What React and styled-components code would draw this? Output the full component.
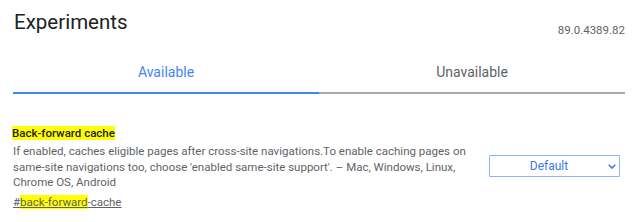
import React, { useState } from 'react';
import styled, { createGlobalStyle } from 'styled-components';

const GlobalStyle = createGlobalStyle`
  html, body {
    margin: 0;
    padding: 0;
    background: #fff;
    font-family: Roboto, "Liberation Sans", sans-serif;
  }
`;

const Page = styled.div`
  width: 640px;
  height: 222px;
  overflow: hidden;
  padding: 0 15px 0 13px;
  box-sizing: border-box;
`;

const Header = styled.div`
  display: flex;
  justify-content: space-between;
  align-items: flex-start;
  height: 34px;
  padding-top: 10px;
  box-sizing: border-box;
`;

const Title = styled.h1`
  margin: 0 0 0 1px;
  font-size: 20.5px;
  font-weight: 400;
  color: #202124;
  line-height: 24px;
`;

const Version = styled.span`
  margin-top: 13px;
  font-size: 11.5px;
  line-height: 14px;
  color: #5f6368;
`;

const Tabs = styled.div`
  display: flex;
  margin-top: 26px;
`;

const Tab = styled.div`
  flex: 1;
  text-align: center;
  font-size: 14px;
  line-height: 24px;
  padding-bottom: 8px;
  color: ${({ active }) => (active ? '#4285f4' : '#5f6368')};
  border-bottom: 2px solid ${({ active }) => (active ? '#4285f4' : '#aaaaaa')};
  cursor: pointer;
`;

const Experiment = styled.div`
  display: flex;
  align-items: flex-start;
  justify-content: space-between;
  margin-top: 32px;
`;

const Info = styled.div`
  width: 460px;
`;

const Mark = styled.mark`
  background: #ffff00;
  color: inherit;
`;

const Name = styled.h2`
  margin: 0 0 0 -1px;
  font-size: 11.5px;
  font-weight: 500;
  color: #202124;
  line-height: 15px;
`;

const Desc = styled.p`
  margin: 3px 0 0;
  font-size: 11.5px;
  line-height: 15.6px;
  color: #5f6368;
`;

const Permalink = styled.a`
  display: inline-block;
  margin-top: 2.5px;
  font-size: 11.5px;
  line-height: 15.5px;
  color: #5f6368;
  text-decoration: underline;
`;

const SelectBox = styled.div`
  position: relative;
  width: 131px;
  height: 22px;
  margin: 29px 5px 0 0;
`;

const Select = styled.select`
  appearance: none;
  width: 100%;
  height: 100%;
  border: 1px solid #8ab4f8;
  background: #fff;
  color: #3b78e7;
  font-family: Roboto, "Liberation Sans", sans-serif;
  font-size: 12px;
  text-align: center;
  text-align-last: center;
  padding: 0 11px 0 0;
  border-radius: 1px;
  outline: none;
`;

const Chevron = styled.svg`
  position: absolute;
  right: 4px;
  top: 9px;
  pointer-events: none;
`;

export default function App() {
  const [value, setValue] = useState('default');
  const [tab, setTab] = useState('available');

  return (
    <Page>
      <GlobalStyle />
      <Header>
        <Title>Experiments</Title>
        <Version>89.0.4389.82</Version>
      </Header>
      <Tabs>
        <Tab active={tab === 'available'} onClick={() => setTab('available')}>Available</Tab>
        <Tab active={tab === 'unavailable'} onClick={() => setTab('unavailable')}>Unavailable</Tab>
      </Tabs>
      <Experiment>
        <Info>
          <Name><Mark>Back-forward cache</Mark></Name>
          <Desc>
            If enabled, caches eligible pages after cross-site navigations.To enable caching pages on
            same-site navigations too, choose 'enabled same-site support'. – Mac, Windows, Linux,
            Chrome OS, Android
          </Desc>
          <Permalink href="#back-forward-cache">#<Mark>back-forward</Mark>-cache</Permalink>
        </Info>
        <SelectBox>
          <Select value={value} onChange={(e) => setValue(e.target.value)}>
            <option value="default">Default</option>
            <option value="enabled">Enabled</option>
            <option value="disabled">Disabled</option>
          </Select>
          <Chevron width="8" height="5" viewBox="0 0 8 5">
            <path d="M0.8 0.8L4 4L7.2 0.8" fill="none" stroke="#3b78e7" strokeWidth="1.6" />
          </Chevron>
        </SelectBox>
      </Experiment>
    </Page>
  );
}
